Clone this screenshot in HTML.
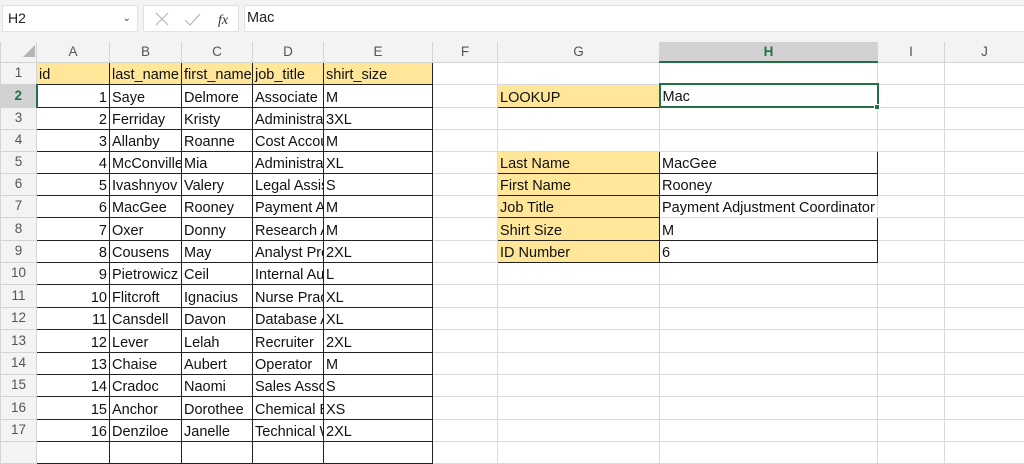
<!DOCTYPE html>
<html><head><meta charset="utf-8"><style>
*{margin:0;padding:0;box-sizing:border-box}
body{width:1024px;height:445px;overflow:hidden;background:#fff;font-family:"Liberation Sans",sans-serif;position:relative}
.top{position:absolute;left:0;top:0;width:1024px;height:42px;background:#f3f3f3}
.nb{position:absolute;left:2px;top:5px;width:136px;height:27px;background:#fff;border:1px solid #e1e1e1;font-size:14px;line-height:25px;padding-left:5px;color:#222}
.nb span{position:absolute;right:6px;top:0;font-size:10px;color:#444}
.ic{position:absolute;left:143px;top:5px;width:96px;height:27px;background:#fff;border:1px solid #e1e1e1}
.fb{position:absolute;left:244px;top:5px;width:790px;height:27px;background:#fff;border:1px solid #e1e1e1;font-size:14.5px;line-height:25px;padding-left:2px;color:#222}
table{position:absolute;left:0;top:42px;width:1024px;border-collapse:collapse;table-layout:fixed;font-size:14.5px;color:#111}
td{border:1px solid #dadada;white-space:nowrap;overflow:hidden;padding:0 2px;line-height:18px;vertical-align:bottom}
tr.h td{background:#f3f3f3;color:#555;text-align:center;vertical-align:middle;font-size:13.5px;border-color:#d4d4d4;border-top:none;line-height:16px}
td.rh{background:#f3f3f3;color:#555;text-align:center;font-size:13.5px;padding:0;border-color:#d4d4d4;vertical-align:middle}
td.b{border:1px solid #222}
td.y{background:#ffe699}
td.r{text-align:right}
td.v{overflow:visible}
</style></head><body>
<div class="top"></div>
<div class="nb">H2<span>&#8964;</span></div>
<div class="ic"><svg width="96" height="27" style="position:absolute;left:0;top:0"><path d="M12 7l12 12M24 7L12 19" stroke="#b5b5b5" stroke-width="1.2" fill="none"/><path d="M41 14l5 5 10-11" stroke="#b5b5b5" stroke-width="1.2" fill="none"/><text x="74" y="18" font-family="Liberation Serif,serif" font-style="italic" font-size="14" fill="#333">fx</text></svg></div>
<div class="fb">Mac</div>
<table>
<colgroup><col style="width:36px"><col style="width:73px"><col style="width:72px"><col style="width:71px"><col style="width:71px"><col style="width:109px"><col style="width:65px"><col style="width:162px"><col style="width:218px"><col style="width:67px"><col style="width:80px"></colgroup>
<tr class="h" style="height:20px"><td style="background:#f3f3f3"><svg width="14" height="14" style="position:relative;left:10px;top:1px"><path d="M13 1V13H1Z" fill="#b4b4b4"/></svg></td><td>A</td><td>B</td><td>C</td><td>D</td><td>E</td><td>F</td><td>G</td><td style="background:#d2d2d2;color:#217346;font-weight:bold;border-bottom:2px solid #217346">H</td><td>I</td><td>J</td></tr>
<tr style="height:22px"><td class="rh">1</td><td class="b y">id</td><td class="b y">last_name</td><td class="b y">first_name</td><td class="b y">job_title</td><td class="b y">shirt_size</td><td></td><td></td><td></td><td></td><td></td></tr>
<tr style="height:23px"><td class="rh" style="background:#d2d2d2;color:#217346;font-weight:bold;border-right:2px solid #217346">2</td><td class="b r">1</td><td class="b">Saye</td><td class="b">Delmore</td><td class="b">Associate Professor</td><td class="b">M</td><td></td><td class="b y">LOOKUP</td><td style="border:2px solid #217346">Mac</td><td></td><td></td></tr>
<tr style="height:22px"><td class="rh">3</td><td class="b r">2</td><td class="b">Ferriday</td><td class="b">Kristy</td><td class="b">Administrator</td><td class="b">3XL</td><td></td><td></td><td></td><td></td><td></td></tr>
<tr style="height:22px"><td class="rh">4</td><td class="b r">3</td><td class="b">Allanby</td><td class="b">Roanne</td><td class="b">Cost Accountant</td><td class="b">M</td><td></td><td></td><td></td><td></td><td></td></tr>
<tr style="height:22px"><td class="rh">5</td><td class="b r">4</td><td class="b">McConville</td><td class="b">Mia</td><td class="b">Administrator</td><td class="b">XL</td><td></td><td class="b y">Last Name</td><td class="b">MacGee</td><td></td><td></td></tr>
<tr style="height:22px"><td class="rh">6</td><td class="b r">5</td><td class="b">Ivashnyov</td><td class="b">Valery</td><td class="b">Legal Assistant</td><td class="b">S</td><td></td><td class="b y">First Name</td><td class="b">Rooney</td><td></td><td></td></tr>
<tr style="height:22px"><td class="rh">7</td><td class="b r">6</td><td class="b">MacGee</td><td class="b">Rooney</td><td class="b">Payment Adjustment</td><td class="b">M</td><td></td><td class="b y">Job Title</td><td class="v" style="border-left:1px solid #222">Payment Adjustment Coordinator</td><td></td><td></td></tr>
<tr style="height:23px"><td class="rh">8</td><td class="b r">7</td><td class="b">Oxer</td><td class="b">Donny</td><td class="b">Research Assistant</td><td class="b">M</td><td></td><td class="b y">Shirt Size</td><td class="b">M</td><td></td><td></td></tr>
<tr style="height:22px"><td class="rh">9</td><td class="b r">8</td><td class="b">Cousens</td><td class="b">May</td><td class="b">Analyst Programmer</td><td class="b">2XL</td><td></td><td class="b y">ID Number</td><td class="b">6</td><td></td><td></td></tr>
<tr style="height:22px"><td class="rh">10</td><td class="b r">9</td><td class="b">Pietrowicz</td><td class="b">Ceil</td><td class="b">Internal Auditor</td><td class="b">L</td><td></td><td></td><td></td><td></td><td></td></tr>
<tr style="height:23px"><td class="rh">11</td><td class="b r">10</td><td class="b">Flitcroft</td><td class="b">Ignacius</td><td class="b">Nurse Practicioner</td><td class="b">XL</td><td></td><td></td><td></td><td></td><td></td></tr>
<tr style="height:22px"><td class="rh">12</td><td class="b r">11</td><td class="b">Cansdell</td><td class="b">Davon</td><td class="b">Database Administrator</td><td class="b">XL</td><td></td><td></td><td></td><td></td><td></td></tr>
<tr style="height:23px"><td class="rh">13</td><td class="b r">12</td><td class="b">Lever</td><td class="b">Lelah</td><td class="b">Recruiter</td><td class="b">2XL</td><td></td><td></td><td></td><td></td><td></td></tr>
<tr style="height:22px"><td class="rh">14</td><td class="b r">13</td><td class="b">Chaise</td><td class="b">Aubert</td><td class="b">Operator</td><td class="b">M</td><td></td><td></td><td></td><td></td><td></td></tr>
<tr style="height:22px"><td class="rh">15</td><td class="b r">14</td><td class="b">Cradoc</td><td class="b">Naomi</td><td class="b">Sales Associate</td><td class="b">S</td><td></td><td></td><td></td><td></td><td></td></tr>
<tr style="height:23px"><td class="rh">16</td><td class="b r">15</td><td class="b">Anchor</td><td class="b">Dorothee</td><td class="b">Chemical Engineer</td><td class="b">XS</td><td></td><td></td><td></td><td></td><td></td></tr>
<tr style="height:22px"><td class="rh">17</td><td class="b r">16</td><td class="b">Denziloe</td><td class="b">Janelle</td><td class="b">Technical Writer</td><td class="b">2XL</td><td></td><td></td><td></td><td></td><td></td></tr>
<tr style="height:22px"><td class="rh"></td><td class="b r"></td><td class="b"></td><td class="b"></td><td class="b"></td><td class="b"></td><td></td><td></td><td></td><td></td><td></td></tr>
</table>
<div style="position:absolute;left:874px;top:104px;width:6px;height:6px;background:#217346;border:1px solid #fff"></div>
</body></html>
